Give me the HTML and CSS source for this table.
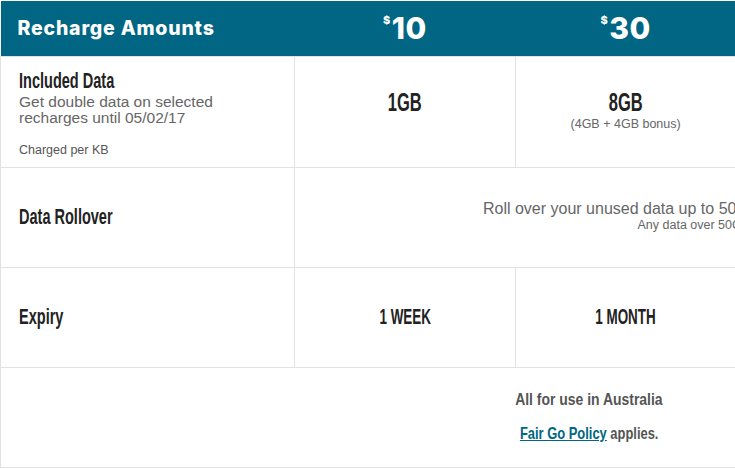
FILE: index.html
```html
<!DOCTYPE html>
<html lang="en">
<head>
  <meta charset="UTF-8">
  <meta name="viewport" content="width=device-width, initial-scale=1.0">
  <title>Recharge Amounts</title>
  <link rel="stylesheet" href="styles.css">
</head>
<body>
  <table class="plans">
    <colgroup>
      <col class="col-label">
      <col class="col-plan">
      <col class="col-plan">
      <col class="col-plan">
      <col class="col-plan">
    </colgroup>
    <thead>
      <tr class="head">
        <th class="head-title">Recharge Amounts</th>
        <th class="price"><sup>$</sup>10</th>
        <th class="price"><sup>$</sup>30</th>
        <th class="price"><sup>$</sup>40</th>
        <th class="price"><sup>$</sup>50</th>
      </tr>
    </thead>
    <tbody>
      <tr class="row row-data">
        <td class="label">
          <h3 class="label-title"><span class="cond">Included Data</span></h3>
          <p class="label-note">Get double data on selected recharges until 05/02/17</p>
          <p class="label-small">Charged per KB</p>
        </td>
        <td class="value"><span class="cond">1GB</span></td>
        <td class="value"><span class="cond">8GB</span><span class="sub">(4GB + 4GB bonus)</span></td>
        <td class="value"><span class="cond">12GB</span><span class="sub">(6GB + 6GB bonus)</span></td>
        <td class="value"><span class="cond">16GB</span><span class="sub">(8GB + 8GB bonus)</span></td>
      </tr>
      <tr class="row">
        <td class="label"><h3 class="label-title"><span class="cond">Data Rollover</span></h3></td>
        <td class="rollover" colspan="4">
          <p class="rollover-main">Roll over your unused data up to 50GB when you recharge before expiry</p>
          <p class="rollover-small">Any data over 50GB will not roll over.</p>
        </td>
      </tr>
      <tr class="row">
        <td class="label"><h3 class="label-title"><span class="cond">Expiry</span></h3></td>
        <td class="value mid"><span class="cond">1 WEEK</span></td>
        <td class="value mid"><span class="cond">1 MONTH</span></td>
        <td class="value mid"><span class="cond">1 MONTH</span></td>
        <td class="value mid"><span class="cond">1 MONTH</span></td>
      </tr>
      <tr class="row foot">
        <td colspan="5">
          <p><span class="cond">All for use in Australia</span></p>
          <p><span class="cond narrow"><a href="#">Fair Go Policy</a> applies.</span></p>
        </td>
      </tr>
    </tbody>
  </table>
</body>
</html>
```

FILE: styles.css
```css
* {
  margin: 0;
  padding: 0;
  box-sizing: border-box;
}

body {
  overflow: hidden;
  background: #fff;
  font-family: "Liberation Sans", Arial, sans-serif;
  color: #222;
}

.plans {
  margin-top: 1px;
  width: 1178px;
  table-layout: fixed;
  border-collapse: collapse;
}

.col-label {
  width: 293px;
}

.col-plan {
  width: 220px;
}

.head {
  background: #006683;
  color: #fff;
  height: 55px;
}

.head th {
  font-family: "Inter", "Liberation Sans", sans-serif;
  font-weight: 800;
  vertical-align: middle;
}

.head-title {
  text-align: left;
  padding-left: 17px;
  font-size: 19.5px;
  letter-spacing: 0.8px;
}

.price {
  font-size: 30px;
  letter-spacing: 0.5px;
}

.price sup {
  font-size: 11px;
  vertical-align: 15px;
  margin-right: 1px;
}

/* condensed bold headings: no condensed face installed, so squeeze a bold one */
.cond {
  display: inline-block;
  font-weight: bold;
  white-space: nowrap;
  transform: scaleX(0.66);
}

.row td {
  border: 1px solid #e2e2e2;
  vertical-align: middle;
}

.row {
  height: 100px;
}

.row-data {
  height: 111px;
}

.label {
  padding: 0 18px;
}

.label .cond {
  transform-origin: left center;
}

.row-data .label {
  vertical-align: top;
  padding-top: 11px;
}

.label-title {
  font-size: 22px;
  color: #222;
}

.label-note {
  width: 215px;
  font-size: 15.5px;
  line-height: 16px;
  color: #666;
}

.label-small {
  font-size: 12.5px;
  color: #555;
  margin-top: 17px;
}

.value {
  text-align: center;
  font-size: 25px;
  color: #222;
}

.value.mid {
  font-size: 22px;
}

.value.mid .cond {
  transform: scaleX(0.61);
}

.row-data .value {
  vertical-align: top;
  padding-top: 31px;
}

.value .sub {
  display: block;
  font-weight: normal;
  font-size: 12.5px;
  color: #666;
  margin-top: 0;
}

.rollover {
  text-align: center;
  color: #666;
  padding-bottom: 3px;
  padding-left: 8px;
}

.rollover-main {
  font-size: 16px;
}

.rollover-small {
  font-size: 12.5px;
}

.foot td {
  text-align: center;
  color: #555;
  font-size: 17px;
  padding-top: 0;
}

.foot .cond {
  transform: scaleX(0.82);
}

.foot .cond.narrow {
  transform: scaleX(0.76);
}

.foot p + p {
  margin-top: 14px;
}

.foot a {
  color: #006683;
}
```
